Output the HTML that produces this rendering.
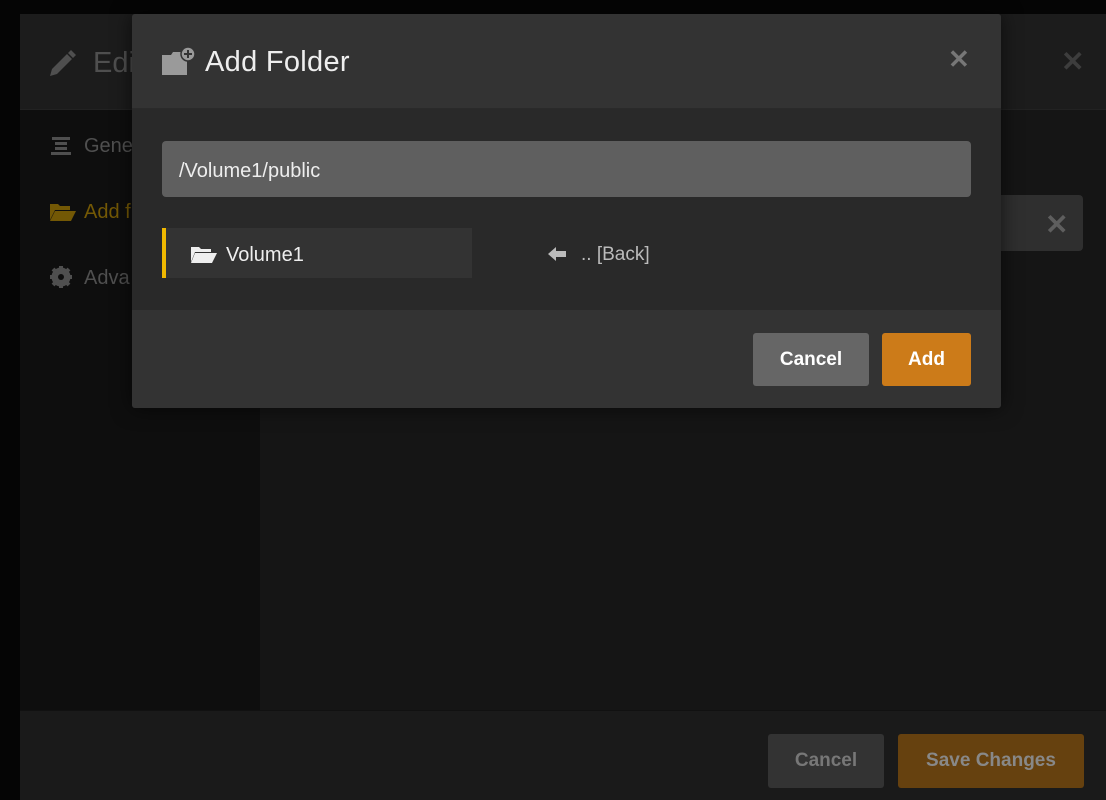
<!DOCTYPE html>
<html><head><style>
*{margin:0;padding:0;box-sizing:border-box}
body{width:1106px;height:800px;background:#050505;position:relative;overflow:hidden;font-family:"Segoe UI","Liberation Sans",sans-serif}
.a{position:absolute}
.t{color:#4f4f4f;font-size:20px}
.btn{position:absolute;border-radius:3px;font-weight:bold;font-size:19px;text-align:center;font-family:"Liberation Sans",sans-serif}
</style></head><body>
<div class="a" style="left:20px;top:14px;width:1086px;height:96px;background:#1c1c1c;border-bottom:1px solid #222"></div>
<div class="a" style="left:20px;top:110px;width:240px;height:600px;background:#0e0e0e"></div>
<div class="a" style="left:260px;top:110px;width:846px;height:600px;background:#151515"></div>
<div class="a" style="left:20px;top:710px;width:1086px;height:90px;background:#1a1a1a;border-top:1px solid #111"></div>
<svg class="a" style="left:48px;top:50px" width="28" height="28" viewBox="0 0 28 28"><path d="M2 26l2-7L19 4l5 5L9 24z M20 3l3-3 5 5-3 3z" fill="#4f4f4f"/></svg>
<div class="a t" style="left:93px;top:47px;font-size:29px">Edi</div>
<svg class="a" style="left:50px;top:136px" width="22" height="20"><g fill="#4f4f4f"><rect x="2" y="1" width="18" height="3"/><rect x="5" y="6" width="12" height="3"/><rect x="5" y="11" width="12" height="3"/><rect x="1" y="16" width="20" height="3"/></g></svg>
<div class="a t" style="left:84px;top:135px">Gene</div>
<svg class="a" style="left:49px;top:202px" width="28" height="20"><path d="M1 2h8l2 2h10v4H6L1 18z M6 9h21l-5 10H1z" fill="#735805"/></svg>
<div class="a t" style="left:84px;top:201px;color:#735805">Add f</div>
<svg class="a" style="left:50px;top:266px" width="22" height="22" viewBox="0 0 22 22"><circle cx="11" cy="11" r="7" fill="none" stroke="#4f4f4f" stroke-width="5"/><g stroke="#4f4f4f" stroke-width="4"><path d="M11 0v22M0 11h22M3 3l16 16M19 3L3 19"/></g><circle cx="11" cy="11" r="3" fill="#0e0e0e"/></svg>
<div class="a t" style="left:84px;top:267px">Adva</div>
<div class="a" style="left:1061px;top:45px;color:#3d3d3d;font-size:28px;font-family:'Liberation Sans';font-weight:bold">✕</div>
<div class="a" style="left:1000px;top:195px;width:83px;height:56px;background:#2f2f2f;border-radius:0 4px 4px 0"></div>
<div class="a" style="left:1045px;top:208px;color:#5e5e5e;font-size:28px;font-family:'Liberation Sans';font-weight:bold">✕</div>
<div class="btn" style="left:768px;top:734px;width:116px;height:54px;background:#333;color:#777;line-height:54px">Cancel</div>
<div class="btn" style="left:898px;top:734px;width:186px;height:54px;background:#66410f;color:#888;line-height:54px">Save Changes</div>
<div class="a" style="left:132px;top:14px;width:869px;height:394px;background:#292929;border-radius:3px;overflow:hidden;box-shadow:0 0 20px rgba(0,0,0,.6)">
 <div class="a" style="left:0;top:0;width:869px;height:95px;background:#333;border-bottom:1px solid #2a2a2a"></div>
 <div class="a" style="left:0;top:296px;width:869px;height:98px;background:#333"></div>
 <svg class="a" style="left:30px;top:33px" width="34" height="30"><path d="M0 8h9l2-3h8l2 3h4v20H0z" fill="#9a9a9a"/><circle cx="26" cy="7" r="7" fill="#9a9a9a" stroke="#333" stroke-width="1.5"/><path d="M26 3v8M22 7h8" stroke="#333" stroke-width="2"/></svg>
 <div class="a" style="left:73px;top:32px;color:#eee;font-size:29px;letter-spacing:0.3px">Add Folder</div>
 <div class="a" style="left:816px;top:30px;color:#777;font-size:26px;font-family:'Liberation Sans';font-weight:bold">✕</div>
 <div class="a" style="left:30px;top:127px;width:809px;height:56px;background:#5f5f5f;border-radius:4px;color:#eee;font-size:20px;line-height:60px;padding-left:17px">/Volume1/public</div>
 <div class="a" style="left:30px;top:214px;width:310px;height:50px;background:#333;border-left:4px solid #f0b800"></div>
 <svg class="a" style="left:58px;top:232px" width="28" height="18"><path d="M1 1h8l2 2h10v3H5L1 16z M5 7h22l-5 10H1z" fill="#eee"/></svg>
 <div class="a" style="left:94px;top:230px;color:#eee;font-size:20px">Volume1</div>
 <svg class="a" style="left:416px;top:233px" width="20" height="14"><path d="M0 7l8-7v4h10v6H8v4z" fill="#bbb"/></svg>
 <div class="a" style="left:449px;top:230px;color:#bbb;font-size:19px">.. [Back]</div>
 <div class="btn" style="left:621px;top:319px;width:116px;height:53px;background:#666;color:#fff;line-height:53px">Cancel</div>
 <div class="btn" style="left:750px;top:319px;width:89px;height:53px;background:#cc7b19;color:#fff;line-height:53px">Add</div>
</div>
</body></html>
